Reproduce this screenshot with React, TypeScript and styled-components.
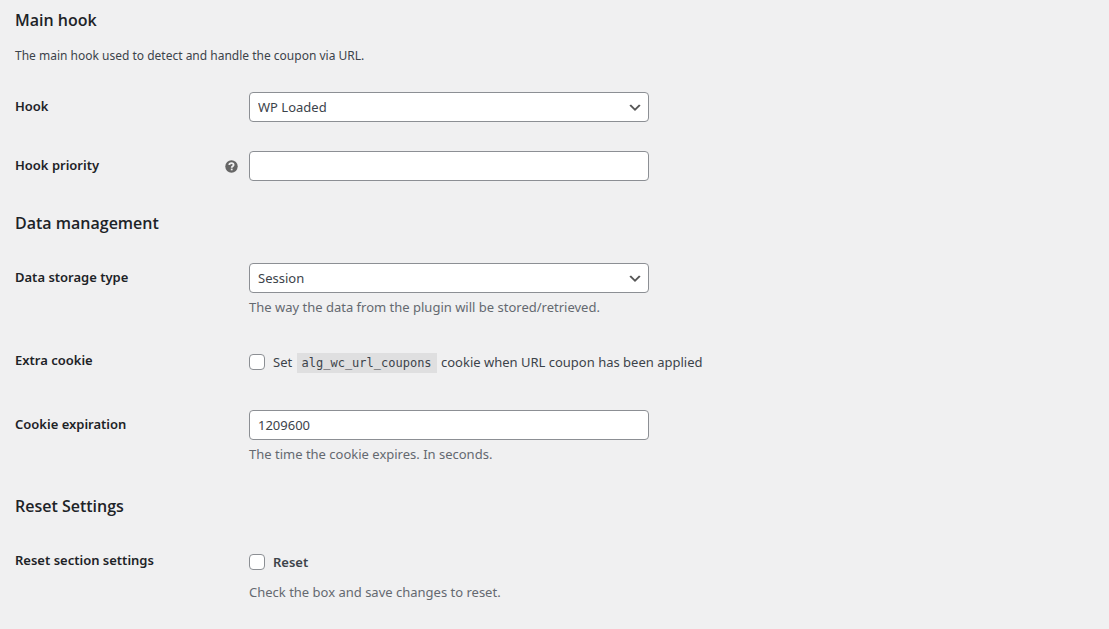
import React, { useState } from "react";
import styled, { createGlobalStyle, css } from "styled-components";

const GlobalStyle = createGlobalStyle`
  *, *::before, *::after {
    box-sizing: border-box;
  }

  body {
    margin: 0;
    background: #f0f0f1;
    color: #3c434a;
    font-family: "Noto Sans", "Open Sans", sans-serif;
    font-size: 13px;
    line-height: 20px;
  }
`;

const Form = styled.form`
  padding: 9px 15px;
`;

const Section = styled.section`
  & + & {
    margin-top: 17px;
  }
`;

const Heading = styled.h2`
  margin: 0 0 14px;
  color: #1d2327;
  font-family: "Open Sans", "Noto Sans", sans-serif;
  font-size: 16px;
  font-weight: 600;
  line-height: 22px;
`;

const Intro = styled.p`
  margin: 0 0 10px;
  font-size: 12px;
  line-height: 22px;
`;

const Row = styled.div<{ $minHeight?: number }>`
  display: grid;
  grid-template-columns: 223px minmax(0, 1fr);
  column-gap: 11px;
  align-items: start;
  min-height: ${(p) => p.$minHeight ?? 0}px;
  padding: 15px 0 14px;
`;

const LabelCell = styled.div`
  display: flex;
  align-items: center;
  justify-content: space-between;
  height: 30px;
`;

const fieldName = css`
  color: #1d2327;
  font-weight: 600;
  line-height: 20px;
  padding-bottom: 2px;
`;

const FieldLabel = styled.label`
  ${fieldName}
`;

const FieldTitle = styled.span`
  ${fieldName}
`;

const HelpButton = styled.button`
  display: flex;
  margin: 0;
  padding: 0;
  border: 0;
  background: none;
  color: #666;
  cursor: help;
`;

const controlBox = css`
  display: block;
  width: 100%;
  max-width: 400px;
  height: 30px;
  margin: 0;
  border: 1px solid #8c8f94;
  border-radius: 4px;
  background: #fff;
  color: #3c434a;
  font: inherit;
  line-height: 28px;
  padding: 0 8px;
`;

const TextInput = styled.input`
  ${controlBox}
`;

const SelectWrap = styled.div`
  display: grid;
  align-items: center;
  max-width: 400px;

  & > * {
    grid-area: 1 / 1;
  }
`;

const Select = styled.select`
  ${controlBox}
  appearance: none;
  padding-right: 24px;
  cursor: pointer;
`;

const Chevron = styled.svg`
  justify-self: end;
  margin-right: 6px;
  pointer-events: none;
`;

const Description = styled.p`
  margin: 4px 0 0;
  color: #646970;
`;

const CheckLine = styled.label<{ $strong?: boolean }>`
  display: flex;
  align-items: center;
  gap: 8px;
  min-height: 32px;
  font-weight: ${(p) => (p.$strong ? 600 : 400)};
`;

const Checkbox = styled.input`
  appearance: none;
  flex: none;
  width: 16px;
  height: 16px;
  margin: 0;
  border: 1px solid #8c8f94;
  border-radius: 4px;
  background: #fff;

  &:checked {
    background: #3582c4;
  }
`;

const Code = styled.code`
  display: inline-block;
  margin: 0 1px;
  padding: 0 5px;
  background: #dfdfe0;
  font-family: "DejaVu Sans Mono", monospace;
  font-size: 12px;
`;

function SelectBox({ id, options }: { id: string; options: string[] }) {
  return (
    <SelectWrap>
      <Select id={id} defaultValue={options[0]}>
        {options.map((option) => (
          <option key={option}>{option}</option>
        ))}
      </Select>
      <Chevron width="16" height="16" viewBox="0 0 20 20" aria-hidden="true">
        <path d="M5 7l5 5 5-5 2 1-7 7-7-7 2-1z" fill="#555" />
      </Chevron>
    </SelectWrap>
  );
}

function HelpTip({ label }: { label: string }) {
  return (
    <HelpButton type="button" aria-label={label}>
      <svg width="13" height="13" viewBox="0 0 13 13" aria-hidden="true">
        <circle cx="6.5" cy="6.5" r="6.2" fill="currentColor" />
        <path
          d="M4.3 5C4.3 3.8 5.2 3.1 6.5 3.1s2.1.7 2.1 1.8c0 1.4-1.9 1.4-1.9 2.9"
          fill="none"
          stroke="#f0f0f1"
          strokeWidth="1.8"
        />
        <rect x="5.8" y="8.6" width="1.8" height="1.7" fill="#f0f0f1" />
      </svg>
    </HelpButton>
  );
}

export default function App() {
  const [priority, setPriority] = useState("");
  const [expiration, setExpiration] = useState("1209600");

  return (
    <>
      <GlobalStyle />
      <Form>
        <Section>
          <Heading>Main hook</Heading>
          <Intro>The main hook used to detect and handle the coupon via URL.</Intro>
          <Row>
            <LabelCell>
              <FieldLabel htmlFor="hook">Hook</FieldLabel>
            </LabelCell>
            <SelectBox id="hook" options={["WP Loaded"]} />
          </Row>
          <Row>
            <LabelCell>
              <FieldLabel htmlFor="priority">Hook priority</FieldLabel>
              <HelpTip label="Help" />
            </LabelCell>
            <TextInput
              id="priority"
              value={priority}
              onChange={(e) => setPriority(e.target.value)}
            />
          </Row>
        </Section>

        <Section>
          <Heading>Data management</Heading>
          <Row>
            <LabelCell>
              <FieldLabel htmlFor="storage">Data storage type</FieldLabel>
            </LabelCell>
            <div>
              <SelectBox id="storage" options={["Session"]} />
              <Description>The way the data from the plugin will be stored/retrieved.</Description>
            </div>
          </Row>
          <Row $minHeight={64}>
            <LabelCell>
              <FieldTitle>Extra cookie</FieldTitle>
            </LabelCell>
            <CheckLine>
              <Checkbox type="checkbox" />
              <span>
                Set <Code>alg_wc_url_coupons</Code> cookie when URL coupon has been applied
              </span>
            </CheckLine>
          </Row>
          <Row>
            <LabelCell>
              <FieldLabel htmlFor="expiration">Cookie expiration</FieldLabel>
            </LabelCell>
            <div>
              <TextInput
                id="expiration"
                value={expiration}
                onChange={(e) => setExpiration(e.target.value)}
              />
              <Description>The time the cookie expires. In seconds.</Description>
            </div>
          </Row>
        </Section>

        <Section>
          <Heading>Reset Settings</Heading>
          <Row>
            <LabelCell>
              <FieldTitle>Reset section settings</FieldTitle>
            </LabelCell>
            <div>
              <CheckLine $strong>
                <Checkbox type="checkbox" />
                <span>Reset</span>
              </CheckLine>
              <Description>Check the box and save changes to reset.</Description>
            </div>
          </Row>
        </Section>
      </Form>
    </>
  );
}
